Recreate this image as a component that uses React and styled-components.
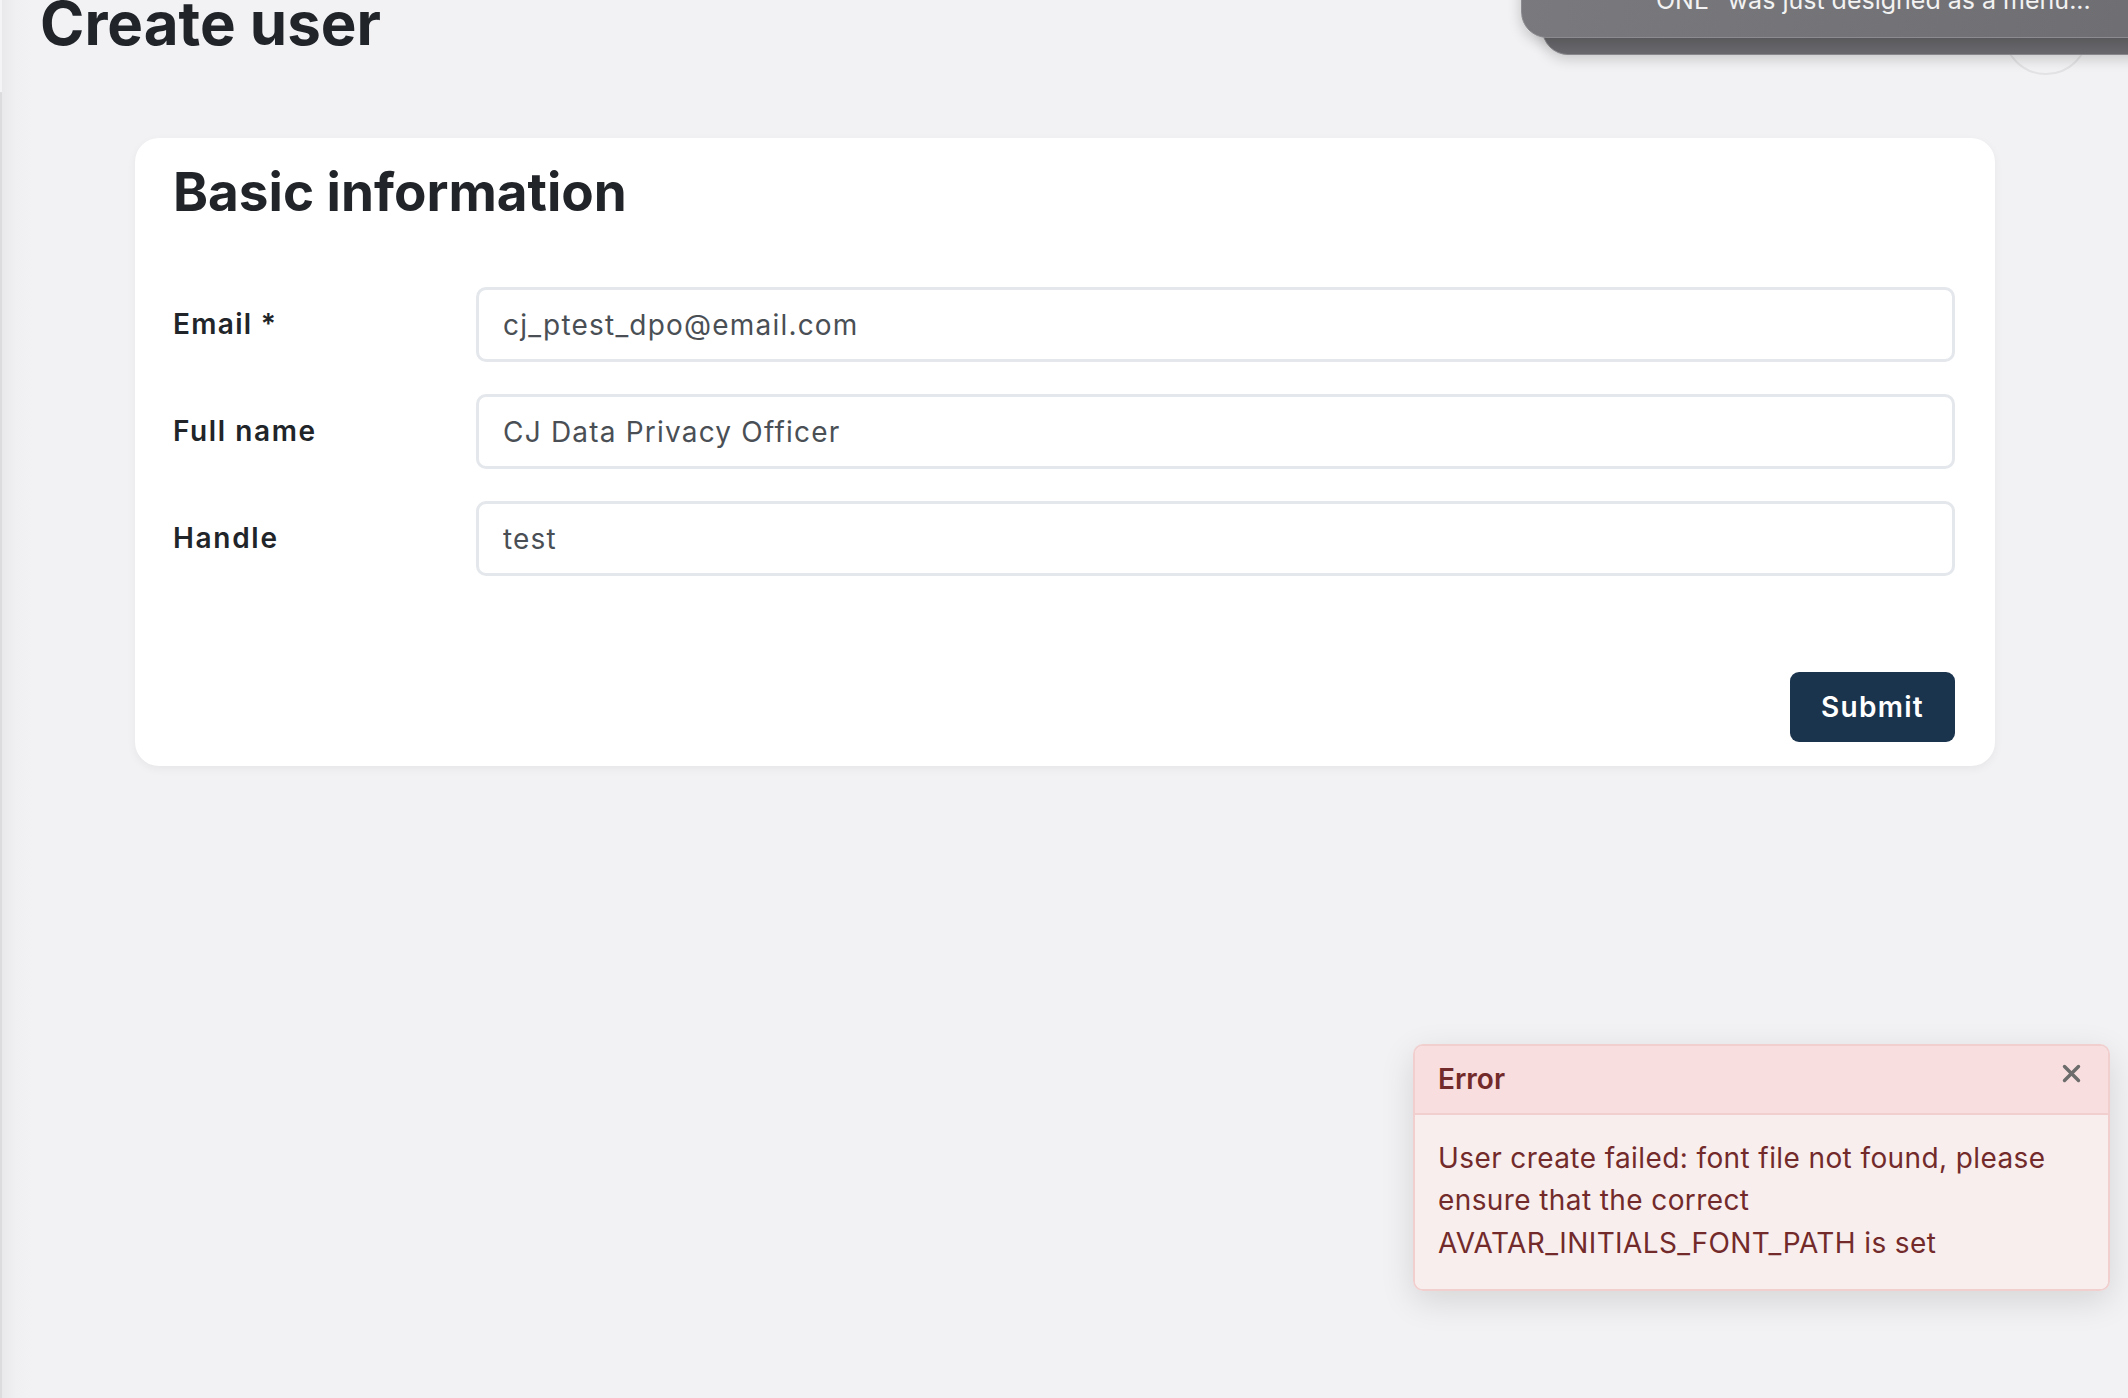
import React from "react";
import styled, { createGlobalStyle } from "styled-components";

const GlobalStyle = createGlobalStyle`
  html, body { margin: 0; padding: 0; }
  body {
    background: #f2f2f4;
    font-family: "Inter", "Noto Sans", sans-serif;
    color: #212529;
    overflow: hidden;
  }
  * { box-sizing: border-box; }
`;

const Layout = styled.div`
  display: flex;
  min-height: 1398px;
  position: relative;
  overflow: hidden;
`;

const SideEdge = styled.div`
  width: 2px;
  flex: none;
  display: flex;
  flex-direction: column;
  background: #dcdcdf;
`;

const SideEdgeTop = styled.div`
  height: 93px;
  background: #f4f4f6;
  border-bottom: 1px solid #dedee1;
`;

const Main = styled.main`
  flex: 1;
  padding: 0 40px 0 38px;
  background: linear-gradient(to right, #e9e9ec 0px, #f0f0f2 14px, #f2f2f4 30px);
`;

const PageTitle = styled.h1`
  margin: -13px 0 0 0;
  font-size: 60px;
  line-height: 72px;
  font-weight: 700;
  color: #212529;
`;

const Card = styled.section`
  margin: 79px 0 0 95px;
  width: 1860px;
  background: #ffffff;
  border-radius: 24px;
  padding: 22px 40px 24px 38px;
  box-shadow: 0 3px 10px rgba(0, 0, 0, 0.05);
`;

const CardTitle = styled.h2`
  margin: 0 0 63px 0;
  font-size: 53px;
  line-height: 64px;
  font-weight: 700;
  color: #212529;
`;

const Form = styled.form`
  display: flex;
  flex-direction: column;
  gap: 32px;
`;

const Row = styled.div`
  display: grid;
  grid-template-columns: 303px 1fr;
  align-items: center;
`;

const Label = styled.label`
  margin-top: -2px;
  font-size: 28px;
  font-weight: 600;
  letter-spacing: ${(p) => p.$spacing || "1.4px"};
  color: #212529;
`;

const Input = styled.input`
  height: 75px;
  width: 100%;
  border: 3px solid #e4e7eb;
  border-radius: 10px;
  padding: 0 24px;
  font-family: "Inter", "Noto Sans", sans-serif;
  font-size: 28px;
  font-weight: 400;
  letter-spacing: 1.2px;
  color: #4a4f55;
  background: #ffffff;
  outline: none;
`;

const Actions = styled.div`
  display: flex;
  justify-content: flex-end;
  margin-top: 64px;
`;

const SubmitButton = styled.button`
  width: 165px;
  height: 70px;
  border: none;
  border-radius: 9px;
  background: #1b344d;
  color: #ffffff;
  font-family: "Inter", "Noto Sans", sans-serif;
  font-size: 28px;
  font-weight: 600;
  letter-spacing: 1.3px;
  cursor: pointer;
`;

const Toast = styled.div`
  position: absolute;
  right: 18px;
  bottom: 107px;
  width: 697px;
  border: 2px solid #f1cfcf;
  border-radius: 10px;
  overflow: hidden;
  box-shadow: 0 10px 34px rgba(0, 0, 0, 0.12);
`;

const ToastHeader = styled.div`
  height: 69px;
  display: flex;
  align-items: center;
  justify-content: space-between;
  padding: 0 27px 0 23px;
  background: #f8dede;
  border-bottom: 2px solid #f2cfcf;
`;

const ToastTitle = styled.strong`
  font-size: 28px;
  font-weight: 600;
  color: #722a2a;
`;

const CloseButton = styled.button`
  width: 20px;
  height: 20px;
  padding: 0;
  border: none;
  background: transparent;
  display: flex;
  align-items: center;
  justify-content: center;
  margin-top: -12px;
  cursor: pointer;
`;

const ToastBody = styled.div`
  padding: 22px 24px 25px 23px;
  background: #f9eeee;
  font-size: 28px;
  line-height: 42.5px;
  letter-spacing: 0.4px;
  color: #722a2a;
`;

const NotifCircle = styled.div`
  position: absolute;
  left: 2003px;
  top: -11px;
  width: 86px;
  height: 86px;
  border-radius: 50%;
  border: 2px solid #e2e2e4;
`;

const NotifBack = styled.div`
  position: absolute;
  left: 1542px;
  top: -71px;
  width: 700px;
  height: 126px;
  border-radius: 26px;
  background: #68686c;
  border: 1px solid #88888c;
  box-shadow: 0 4px 14px rgba(0, 0, 0, 0.18);
`;

const Notif = styled.div`
  position: absolute;
  left: 1521px;
  top: -88px;
  width: 720px;
  height: 126px;
  border-radius: 26px;
  background: linear-gradient(100deg, #7a7a7e 0%, #727276 60%, #6d6d71 100%);
  border: 1px solid #8c8c90;
  box-shadow: 0 4px 14px rgba(0, 0, 0, 0.2);
  display: flex;
  align-items: flex-end;
  padding: 0 0 22px 134px;
`;

const NotifText = styled.div`
  font-family: "Inter", "Noto Sans", sans-serif;
  font-size: 25px;
  line-height: 30px;
  color: #f2f2f2;
  white-space: nowrap;
`;

function CloseIcon() {
  return (
    <svg width="19" height="19" viewBox="0 0 19 19" aria-hidden="true">
      <path d="M2.5 2.5 L16.5 16.5 M16.5 2.5 L2.5 16.5" stroke="#6c6c6c" strokeWidth="3.4" strokeLinecap="round" />
    </svg>
  );
}

export default function App() {
  return (
    <>
      <GlobalStyle />
      <Layout>
        <SideEdge>
          <SideEdgeTop />
        </SideEdge>
        <Main>
          <PageTitle>Create user</PageTitle>
          <Card>
            <CardTitle>Basic information</CardTitle>
            <Form onSubmit={(e) => e.preventDefault()}>
              <Row>
                <Label htmlFor="email" $spacing="1.3px">Email *</Label>
                <Input id="email" type="email" defaultValue="cj_ptest_dpo@email.com" />
              </Row>
              <Row>
                <Label htmlFor="fullname" $spacing="1.6px">Full name</Label>
                <Input id="fullname" type="text" defaultValue="CJ Data Privacy Officer" />
              </Row>
              <Row>
                <Label htmlFor="handle" $spacing="1.7px">Handle</Label>
                <Input id="handle" type="text" defaultValue="test" />
              </Row>
              <Actions>
                <SubmitButton type="submit">Submit</SubmitButton>
              </Actions>
            </Form>
          </Card>
        </Main>

        <NotifCircle />
        <NotifBack />
        <Notif>
          <NotifText>ONE" was just designed as a menu...</NotifText>
        </Notif>

        <Toast role="alert">
          <ToastHeader>
            <ToastTitle>Error</ToastTitle>
            <CloseButton aria-label="Close">
              <CloseIcon />
            </CloseButton>
          </ToastHeader>
          <ToastBody>
            User create failed: font file not found, please ensure that the correct AVATAR_INITIALS_FONT_PATH is set
          </ToastBody>
        </Toast>
      </Layout>
    </>
  );
}
